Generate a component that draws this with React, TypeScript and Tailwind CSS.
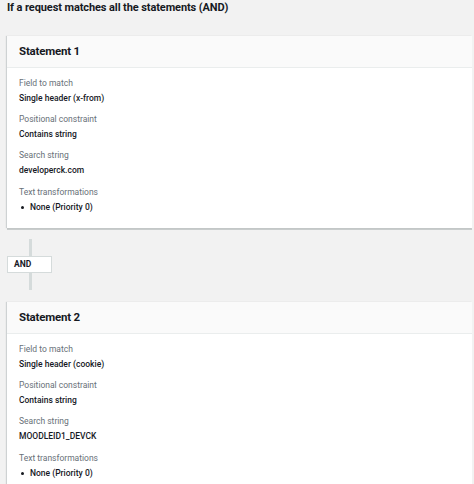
import React from 'react'

type Field = { label: string; value: string }

const statements: { title: string; fields: Field[]; transforms: string[] }[] = [
  {
    title: 'Statement 1',
    fields: [
      { label: 'Field to match', value: 'Single header (x-from)' },
      { label: 'Positional constraint', value: 'Contains string' },
      { label: 'Search string', value: 'developerck.com' },
    ],
    transforms: ['None (Priority 0)'],
  },
  {
    title: 'Statement 2',
    fields: [
      { label: 'Field to match', value: 'Single header (cookie)' },
      { label: 'Positional constraint', value: 'Contains string' },
      { label: 'Search string', value: 'MOODLEID1_DEVCK' },
    ],
    transforms: ['None (Priority 0)'],
  },
]

function StatementCard({ s }: { s: (typeof statements)[number] }) {
  return (
    <div className="ml-[7px] mr-[2px] bg-white shadow-[-1px_0_1px_rgba(0,28,36,0.15),0_2px_0_#c8cccc]">
      <div className="h-[32px] flex items-center px-[12px] bg-[#fafafa] border-b border-[#eaeded]">
        <h3 className="text-[11.5px] tracking-[-0.2px] font-bold text-[#16191f]">{s.title}</h3>
      </div>
      <div className="px-[12px] pt-[8px] pb-[13px] flex flex-col gap-[6px]">
        {s.fields.map(f => (
          <div key={f.label}>
            <div className="text-[8.5px] leading-[15px] text-[#687078]">{f.label}</div>
            <div className="text-[8.5px] leading-[15px] font-medium text-[#16191f]">{f.value}</div>
          </div>
        ))}
        <div className="mt-[1px]">
          <div className="text-[8.5px] leading-[15px] text-[#687078]">Text transformations</div>
          <ul className="pl-[2px]">
            {s.transforms.map(t => (
              <li key={t} className="flex items-center gap-[6px] text-[8.5px] leading-[15px] font-medium text-[#16191f]">
                <span className="w-[3px] h-[3px] rounded-full bg-[#16191f]" />
                {t}
              </li>
            ))}
          </ul>
        </div>
      </div>
    </div>
  )
}

export default function App() {
  return (
    <div className="w-[474px] h-[484px] overflow-hidden bg-[#f2f2f2] font-['Roboto',sans-serif]">
      <h2 className="px-[7px] h-[36px] pt-0 text-[11px] tracking-[-0.1px] leading-[16px] font-bold text-[#16191f]">
        If a request matches all the statements (AND)
      </h2>
      <StatementCard s={statements[0]} />
      {/* AND connector */}
      <div className="pt-[11px] pb-[12px] flex flex-col items-start">
        <div className="ml-[29px] w-[3px] h-[17px] bg-[#d5dbdb]" />
        <div className="ml-[7px] w-[45px] h-[17px] bg-white border border-[#d5dbdb] flex items-center px-[6px] text-[8.5px] font-bold text-[#16191f]">
          AND
        </div>
        <div className="ml-[29px] w-[3px] h-[17px] bg-[#d5dbdb]" />
      </div>
      <StatementCard s={statements[1]} />
    </div>
  )
}
